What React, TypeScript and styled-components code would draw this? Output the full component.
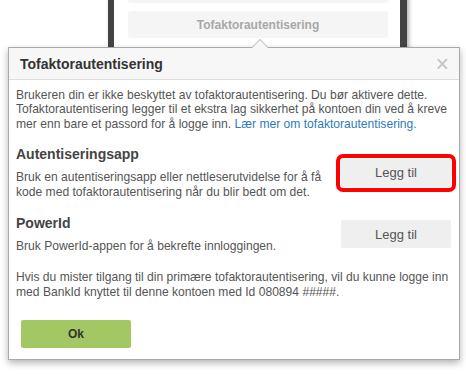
import { createGlobalStyle, styled } from "styled-components";

const GlobalStyle = createGlobalStyle`
  html, body {
    margin: 0;
    padding: 0;
    background: #ffffff;
    font-family: "Liberation Sans", Arial, sans-serif;
    overflow: hidden;
  }
  * { box-sizing: border-box; }
`

const Page = styled.div`
  position: relative;
  width: 466px;
  height: 374px;
  overflow: hidden;
`

const Phone = styled.div`
  margin-left: 108px;
  width: 299px;
  height: 374px;
  border-left: 6px solid #444444;
  border-right: 7px solid #444444;
  background: #ffffff;
  box-shadow: 2px 0 4px rgba(0, 0, 0, 0.3);
  padding: 0 12px 0 14px;
`

const PhoneMenu = styled.div`
  display: flex;
  flex-direction: column;
  gap: 8px;
  margin-top: -24px;
`

const PhoneButton = styled.div`
  height: 27px;
  border-radius: 3px;
  background: #f5f5f5;
  color: #a8a8a8;
  font-size: 12px;
  font-weight: bold;
  display: flex;
  align-items: center;
  justify-content: center;
`

const Modal = styled.div`
  position: absolute;
  left: 8px;
  top: 47px;
  width: 452px;
  height: 313px;
  border: 1px solid #a9a9a9;
  background: #ffffff;
  box-shadow: 0 3px 7px rgba(0, 0, 0, 0.3);
  display: flex;
  flex-direction: column;

  &::before,
  &::after {
    content: "";
    position: absolute;
    left: 242px;
    border-style: solid;
    border-color: transparent;
  }
  &::before {
    top: -9px;
    border-width: 0 9px 9px 9px;
    border-bottom-color: #a9a9a9;
  }
  &::after {
    top: -8px;
    left: 243px;
    border-width: 0 8px 8px 8px;
    border-bottom-color: #f7f7f7;
  }
`

const Header = styled.div`
  height: 32px;
  background: #f7f7f7;
  border-bottom: 1px solid #dddddd;
  display: flex;
  align-items: center;
  padding: 0 10px 0 11px;
`

const Title = styled.h3`
  margin: 0;
  font-size: 14px;
  line-height: 16px;
  font-weight: bold;
  color: #333333;
`

const Close = styled.span`
  margin-left: auto;
  color: #c4c4c4;
  font-size: 23px;
  line-height: 16px;
  cursor: pointer;
`

const Body = styled.div`
  padding: 8px 8px 0 7px;
  color: #555555;
  font-size: 12.1px;
  line-height: 14.4px;
`

const Paragraph = styled.p<{ $top?: number }>`
  margin: ${p => p.$top ?? 0}px 0 0;
`

const Link = styled.a`
  color: #2f7bb8;
  text-decoration: none;
`

const Option = styled.div<{ $top: number }>`
  margin-top: ${p => p.$top}px;
  display: grid;
  grid-template-columns: 1fr 110px;
  column-gap: 14px;
  align-items: center;
`

const OptionTitle = styled.h4`
  margin: 0;
  font-size: 14px;
  line-height: 16px;
  font-weight: bold;
  color: #444444;
`

const OptionText = styled.p`
  margin: 8px 0 0;
`

const AddButton = styled.button<{ $highlighted?: boolean }>`
  height: 28px;
  border: none;
  border-radius: 2px;
  background: #efefef;
  color: #555555;
  font-family: inherit;
  font-size: 13px;
  outline: ${p => (p.$highlighted ? "4px solid #ff0000" : "none")};
  outline-offset: 1px;
`

const Footer = styled.div`
  margin-top: auto;
  padding: 0 0 11px 12px;
`

const OkButton = styled.button`
  width: 110px;
  height: 28px;
  border: none;
  border-radius: 2px;
  background: #a3c762;
  color: #333333;
  font-family: inherit;
  font-size: 12px;
  font-weight: bold;
`

const App = () => {
  return (
    <Page>
      <GlobalStyle />
      <Phone>
        <PhoneMenu>
          <PhoneButton />
          <PhoneButton>Tofaktorautentisering</PhoneButton>
        </PhoneMenu>
      </Phone>
      <Modal>
        <Header>
          <Title>Tofaktorautentisering</Title>
          <Close>×</Close>
        </Header>
        <Body>
          <Paragraph>
            Brukeren din er ikke beskyttet av tofaktorautentisering. Du bør aktivere dette.
            Tofaktorautentisering legger til et ekstra lag sikkerhet på kontoen din ved å kreve
            mer enn bare et passord for å logge inn.{" "}
            <Link href="#">Lær mer om tofaktorautentisering.</Link>
          </Paragraph>
          <Option $top={15}>
            <div>
              <OptionTitle>Autentiseringsapp</OptionTitle>
              <OptionText>
                Bruk en autentiseringsapp eller nettleserutvidelse for å få kode med
                tofaktorautentisering når du blir bedt om det.
              </OptionText>
            </div>
            <AddButton $highlighted>Legg til</AddButton>
          </Option>
          <Option $top={16}>
            <div>
              <OptionTitle>PowerId</OptionTitle>
              <OptionText>Bruk PowerId-appen for å bekrefte innloggingen.</OptionText>
            </div>
            <AddButton>Legg til</AddButton>
          </Option>
          <Paragraph $top={17}>
            Hvis du mister tilgang til din primære tofaktorautentisering, vil du kunne logge inn
            med BankId knyttet til denne kontoen med Id 080894 #####.
          </Paragraph>
        </Body>
        <Footer>
          <OkButton>Ok</OkButton>
        </Footer>
      </Modal>
    </Page>
  )
}

export default App
